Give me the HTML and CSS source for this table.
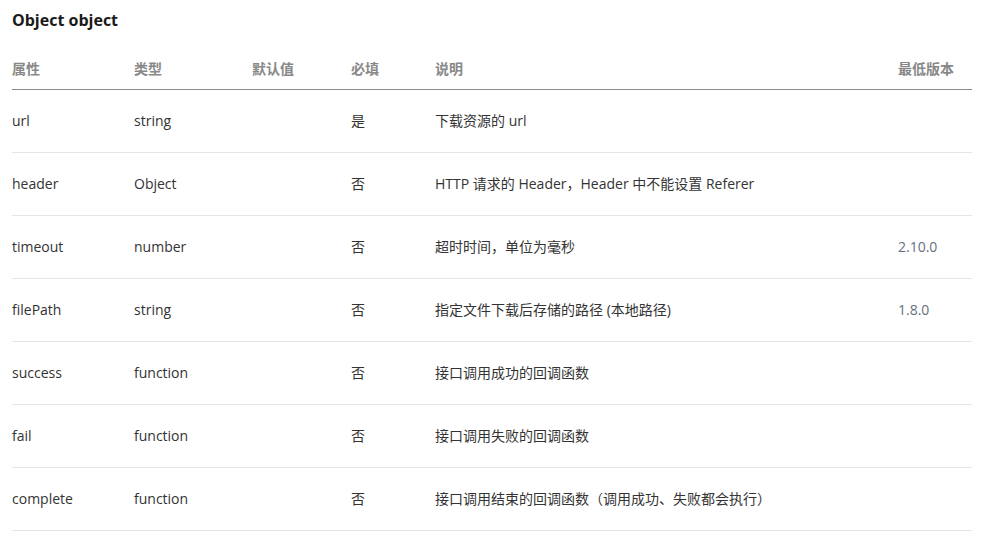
FILE: index.html
```html
<!DOCTYPE html>
<html lang="zh-CN">
<head>
<meta charset="utf-8">
<title>Object object</title>
<link rel="stylesheet" href="styles.css">
</head>
<body>
<div class="doc">
  <h3 class="title">Object object</h3>
  <table class="params">
    <colgroup>
      <col class="c-name"><col class="c-type"><col class="c-default"><col class="c-req"><col class="c-desc"><col class="c-ver">
    </colgroup>
    <thead>
      <tr><th>属性</th><th>类型</th><th>默认值</th><th>必填</th><th>说明</th><th>最低版本</th></tr>
    </thead>
    <tbody>
      <tr><td>url</td><td>string</td><td></td><td>是</td><td>下载资源的 url</td><td class="ver"></td></tr>
      <tr><td>header</td><td>Object</td><td></td><td>否</td><td>HTTP 请求的 Header，Header 中不能设置 Referer</td><td class="ver"></td></tr>
      <tr><td>timeout</td><td>number</td><td></td><td>否</td><td>超时时间，单位为毫秒</td><td class="ver">2.10.0</td></tr>
      <tr><td>filePath</td><td>string</td><td></td><td>否</td><td>指定文件下载后存储的路径 (本地路径)</td><td class="ver">1.8.0</td></tr>
      <tr><td>success</td><td>function</td><td></td><td>否</td><td>接口调用成功的回调函数</td><td class="ver"></td></tr>
      <tr><td>fail</td><td>function</td><td></td><td>否</td><td>接口调用失败的回调函数</td><td class="ver"></td></tr>
      <tr><td>complete</td><td>function</td><td></td><td>否</td><td>接口调用结束的回调函数（调用成功、失败都会执行）</td><td class="ver"></td></tr>
    </tbody>
  </table>
</div>
</body>
</html>
```

FILE: styles.css
```css
html, body {
  margin: 0;
  padding: 0;
  background: #fff;
}
body {
  font-family: "Open Sans", "Noto Sans CJK SC", sans-serif;
  color: #333;
  font-size: 14px;
}
.doc {
  padding: 8px 0 0 12px;
  width: 960px;
}
.title {
  margin: 0;
  font-size: 16px;
  line-height: 24px;
  font-weight: 700;
  color: #1a1a1a;
}
.params {
  margin-top: 15px;
  width: 960px;
  border-collapse: collapse;
  table-layout: fixed;
}
.c-name { width: 122px; }
.c-type { width: 118px; }
.c-default { width: 99px; }
.c-req { width: 84px; }
.c-desc { width: 463px; }
.c-ver { width: 74px; }
.params th {
  text-align: left;
  font-weight: 700;
  font-size: 14px;
  color: #888;
  height: 42px;
  padding: 0;
  border-bottom: 1px solid #8c8c8c;
  vertical-align: middle;
}
.params td {
  height: 62px;
  padding: 0;
  border-bottom: 1px solid #e5e5e5;
  vertical-align: middle;
  line-height: 20px;
}
.params td.ver {
  color: #66707e;
}
```
